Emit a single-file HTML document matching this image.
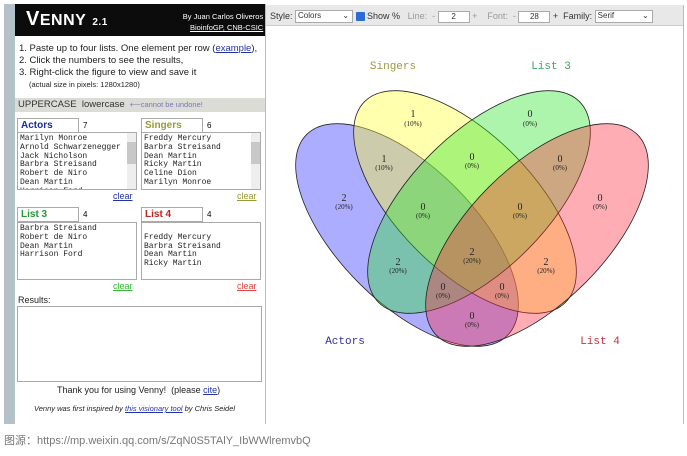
<!DOCTYPE html>
<html><head><meta charset="utf-8"><style>
*{margin:0;padding:0;box-sizing:border-box}
body{width:687px;height:456px;background:#fff;position:relative;overflow:hidden;font-family:"Liberation Sans",sans-serif;}
.a{position:absolute;white-space:nowrap}
.mono{font-family:"Liberation Mono",monospace;font-size:8px;line-height:8.8px;color:#222}
.ta{position:absolute;border:1px solid #aaa;background:#fff;padding:2px 2px}
.nm{position:absolute;height:15px;border:1px solid #aaa;background:#fff;font-weight:bold;font-size:10px;padding:1px 3px}
.lnk{color:#2233aa;text-decoration:underline}
</style></head><body>
<div class="a" style="left:4px;top:4px;width:11px;height:420px;background:#b5c1c9"></div>
<div class="a" style="left:15px;top:4px;width:251px;height:420px;background:#fff;border-right:1px solid #bbb"></div>
<div class="a" style="left:15px;top:4px;width:250px;height:32px;background:#0c0c0c"></div>
<div class="a" style="left:26px;top:8px;color:#fff;font-size:20px;font-weight:bold;letter-spacing:0.5px">V<span style="font-size:16px">ENNY</span> <span style="font-size:10px">2.1</span></div>
<div class="a" style="left:178px;top:11px;color:#fff;font-size:7.5px;text-align:right;line-height:11px">By Juan Carlos Oliveros<br><span style="text-decoration:underline;margin-left:12px">BioinfoGP, CNB-CSIC</span></div>
<div class="a" style="left:19px;top:43px;font-size:9.5px;line-height:12px;color:#222">1. Paste up to four lists. One element per row (<span class="lnk">example</span>),<br>2. Click the numbers to see the results,<br>3. Right-click the figure to view and save it<br><span style="font-size:7.5px;margin-left:10px">(actual size in pixels: 1280x1280)</span></div>
<div class="a" style="left:15px;top:98px;width:250px;height:14px;background:#dcdcd6"></div>
<div class="a" style="left:18px;top:99px;font-size:9.5px;color:#333">UPPERCASE &nbsp;lowercase &nbsp;<span style="font-size:7.5px;color:#7777bb">⟵cannot be undone!</span></div>

<div class="nm" style="left:17px;top:118px;width:62px;color:#1a2a99">Actors</div><div class="a" style="left:83px;top:121px;font-size:8px">7</div>
<div class="nm" style="left:141px;top:118px;width:62px;color:#999933">Singers</div><div class="a" style="left:207px;top:121px;font-size:8px">6</div>
<div class="ta mono" style="left:17px;top:132px;width:120px;height:58px;overflow:hidden">Marilyn Monroe<br>Arnold Schwarzenegger<br>Jack Nicholson<br>Barbra Streisand<br>Robert de Niro<br>Dean Martin<br>Harrison Ford</div>
<div class="a" style="left:127px;top:133px;width:9px;height:56px;background:#eee"><div style="margin-top:9px;height:22px;background:#c8c8c8"></div></div>
<div class="ta mono" style="left:141px;top:132px;width:120px;height:58px;overflow:hidden">Freddy Mercury<br>Barbra Streisand<br>Dean Martin<br>Ricky Martin<br>Celine Dion<br>Marilyn Monroe</div>
<div class="a" style="left:251px;top:133px;width:9px;height:56px;background:#eee"><div style="margin-top:9px;height:22px;background:#c8c8c8"></div></div>
<div class="a lnk" style="left:113px;top:191px;font-size:9px">clear</div>
<div class="a" style="left:237px;top:191px;font-size:9px;color:#999933;text-decoration:underline">clear</div>

<div class="nm" style="left:17px;top:207px;width:62px;color:#229933">List 3</div><div class="a" style="left:83px;top:210px;font-size:8px">4</div>
<div class="nm" style="left:141px;top:207px;width:62px;color:#bb2222">List 4</div><div class="a" style="left:207px;top:210px;font-size:8px">4</div>
<div class="ta mono" style="left:17px;top:222px;width:120px;height:58px">Barbra Streisand<br>Robert de Niro<br>Dean Martin<br>Harrison Ford</div>
<div class="ta mono" style="left:141px;top:222px;width:120px;height:58px">&nbsp;<br>Freddy Mercury<br>Barbra Streisand<br>Dean Martin<br>Ricky Martin</div>
<div class="a" style="left:113px;top:281px;font-size:9px;color:#33bb33;text-decoration:underline">clear</div>
<div class="a" style="left:237px;top:281px;font-size:9px;color:#dd4444;text-decoration:underline">clear</div>
<div class="a" style="left:18px;top:295px;font-size:9px;color:#222">Results:</div>
<div class="ta" style="left:17px;top:306px;width:245px;height:76px"></div>
<div class="a" style="left:57px;top:385px;font-size:9px;color:#222">Thank you for using Venny! &nbsp;(please <span class="lnk">cite</span>)</div>
<div class="a" style="left:34px;top:404px;font-size:7.5px;font-style:italic;color:#222">Venny was first inspired by <span class="lnk">this visionary tool</span> by Chris Seidel</div>

<div class="a" style="left:266px;top:5px;width:418px;height:21px;background:#e8e8e8;border-bottom:1px solid #ccc"></div>
<div class="a" style="left:683px;top:5px;width:1px;height:419px;background:#bbb"></div>
<div class="a" style="left:270px;top:10px;font-size:9px;color:#333">Style: <span style="display:inline-block;width:58px;height:13px;border:1px solid #aaa;background:#fff;font-size:8px;padding-left:2px;vertical-align:middle">Colors<span style="float:right;margin-right:3px">⌄</span></span> <span style="display:inline-block;width:9px;height:9px;background:#2a6bd6;vertical-align:middle;border-radius:1px"></span> Show % &nbsp;&nbsp;<span style="color:#999">Line: &nbsp;-</span> <span style="display:inline-block;width:32px;height:12px;border:1px solid #aaa;background:#fff;font-size:8px;text-align:center;vertical-align:middle">2</span> <span style="color:#999">+ &nbsp;&nbsp;&nbsp;Font: &nbsp;-</span> <span style="display:inline-block;width:32px;height:12px;border:1px solid #aaa;background:#fff;font-size:8px;text-align:center;vertical-align:middle">28</span> + &nbsp;Family: <span style="display:inline-block;width:58px;height:13px;border:1px solid #aaa;background:#fff;font-size:8px;padding-left:2px;vertical-align:middle">Serif<span style="float:right;margin-right:3px">⌄</span></span></div>

<svg class="a" style="left:0;top:0" width="687" height="456" font-family="Liberation Serif,serif">
<g stroke="#222" stroke-width="0.8">
<ellipse cx="407" cy="235" rx="68" ry="142" transform="rotate(-45 407 235)" fill="rgba(40,40,255,0.38)"/>
<ellipse cx="465" cy="202" rx="68" ry="142" transform="rotate(-45 465 202)" fill="rgba(255,255,40,0.38)"/>
<ellipse cx="479" cy="202" rx="68" ry="142" transform="rotate(45 479 202)" fill="rgba(40,230,40,0.38)"/>
<ellipse cx="537" cy="235" rx="68" ry="142" transform="rotate(45 537 235)" fill="rgba(255,40,60,0.38)"/>
</g>
<g font-size="11" font-family="Liberation Mono,monospace">
<text x="393" y="69" text-anchor="middle" fill="#9a9a40">Singers</text>
<text x="551" y="69" text-anchor="middle" fill="#40a060">List 3</text>
<text x="345" y="344" text-anchor="middle" fill="#3030a0">Actors</text>
<text x="600" y="344" text-anchor="middle" fill="#c03040">List 4</text>
</g>
<g text-anchor="middle" fill="#222">
<g font-size="10">
<text x="413" y="117">1</text><text x="530" y="117">0</text><text x="384" y="162">1</text><text x="472" y="160">0</text><text x="560" y="162">0</text><text x="344" y="201">2</text><text x="423" y="210">0</text><text x="520" y="210">0</text><text x="600" y="201">0</text><text x="472" y="255">2</text><text x="398" y="265">2</text><text x="546" y="265">2</text><text x="443" y="290">0</text><text x="502" y="290">0</text><text x="472" y="319">0</text>
</g>
<g font-size="7">
<text x="413" y="126">(10%)</text><text x="530" y="126">(0%)</text><text x="384" y="170">(10%)</text><text x="472" y="168">(0%)</text><text x="560" y="170">(0%)</text><text x="344" y="209">(20%)</text><text x="423" y="218">(0%)</text><text x="520" y="218">(0%)</text><text x="600" y="209">(0%)</text><text x="472" y="263">(20%)</text><text x="398" y="273">(20%)</text><text x="546" y="273">(20%)</text><text x="443" y="298">(0%)</text><text x="502" y="298">(0%)</text><text x="472" y="327">(0%)</text>
</g></g>
</svg>
<div class="a" style="left:4px;top:432px;font-size:11px;color:#777;font-family:'Liberation Sans','Noto Sans CJK SC',sans-serif">图源：https://mp.weixin.qq.com/s/ZqN0S5TAlY_IbWWlremvbQ</div>
</body></html>
